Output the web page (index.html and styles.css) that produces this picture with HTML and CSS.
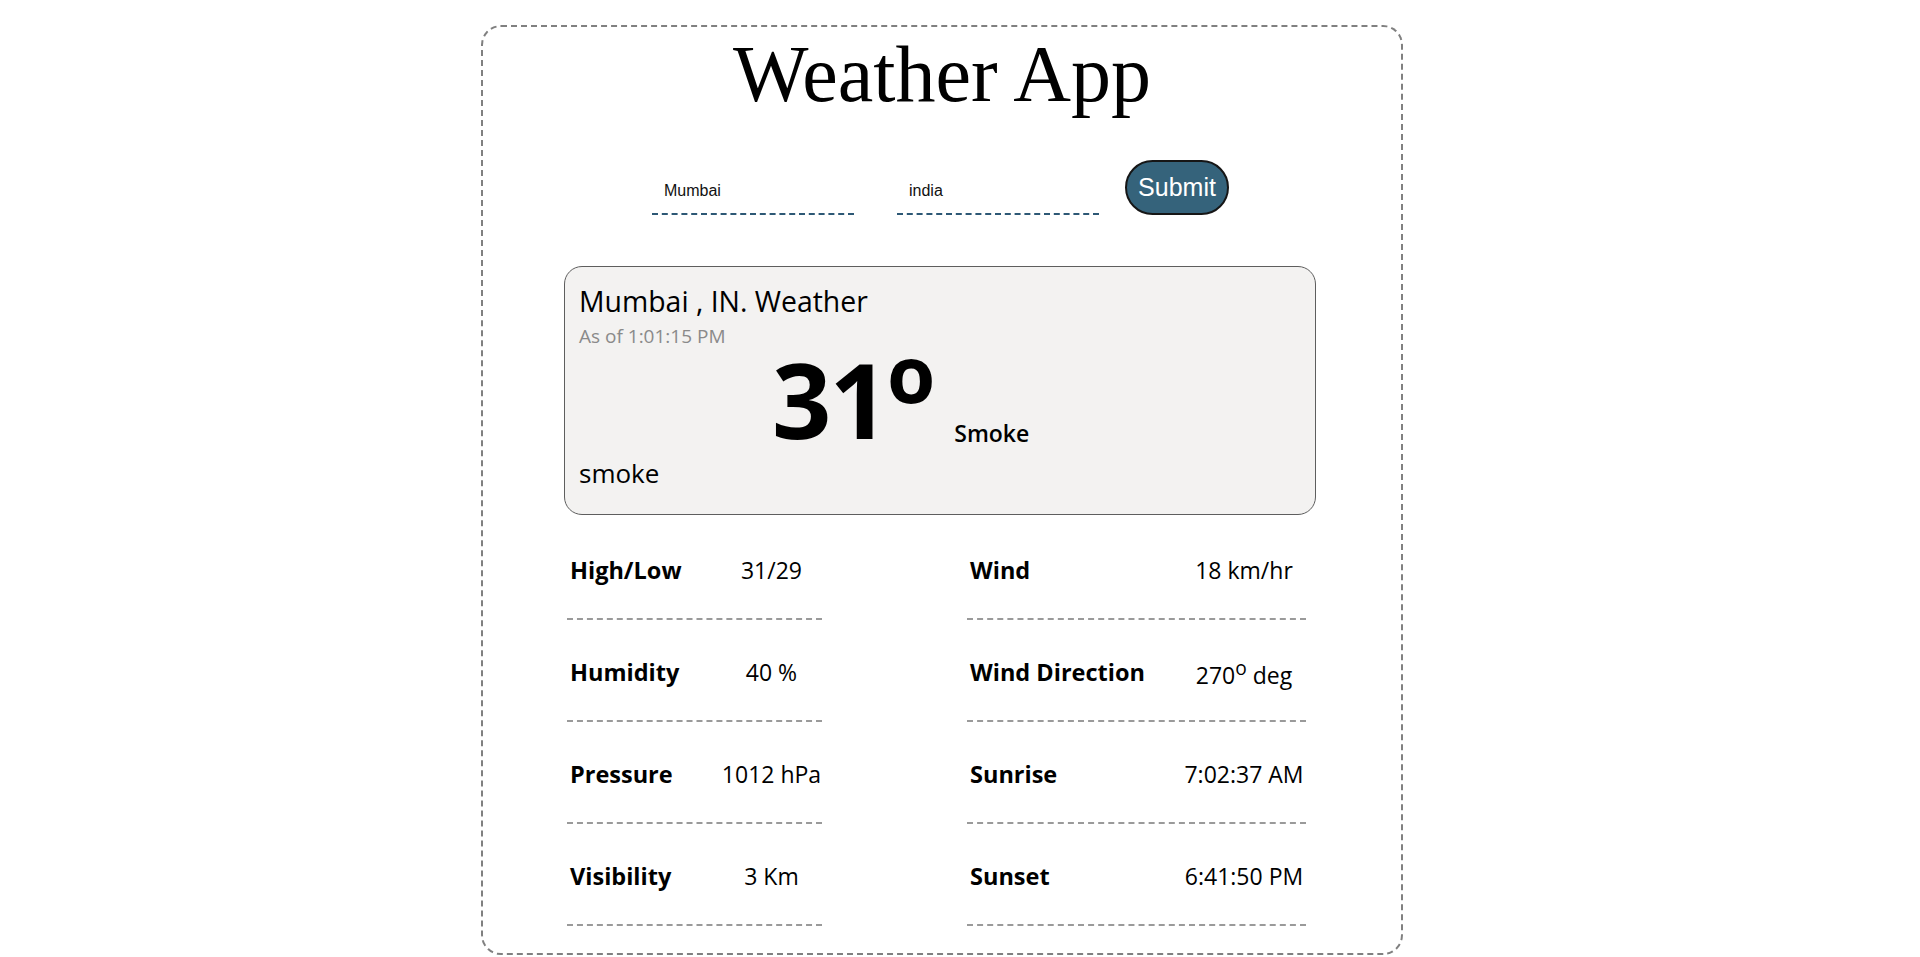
FILE: index.html
```html
<!DOCTYPE html>
<html lang="en">
<head>
<meta charset="utf-8">
<title>Weather App</title>
<link rel="stylesheet" href="styles.css">
</head>
<body>
<div class="app">
  <h1 class="title">Weather App</h1>
  <form class="search">
    <input class="field field-city" type="text" value="Mumbai">
    <input class="field field-country" type="text" value="india">
    <button class="submit" type="button">Submit</button>
  </form>
  <section class="card">
    <div class="card-title">Mumbai , IN. Weather</div>
    <div class="card-time">As of 1:01:15 PM</div>
    <div class="temp-row"><span class="temp">31<sup>o</sup></span><span class="cond">Smoke</span></div>
    <div class="desc">smoke</div>
  </section>
  <div class="details">
    <div class="table table-left">
      <div class="row"><span class="label">High/Low</span><span class="value">31/29</span></div>
      <div class="row"><span class="label">Humidity</span><span class="value">40 %</span></div>
      <div class="row"><span class="label">Pressure</span><span class="value">1012 hPa</span></div>
      <div class="row"><span class="label">Visibility</span><span class="value">3 Km</span></div>
    </div>
    <div class="table table-right">
      <div class="row"><span class="label">Wind</span><span class="value">18 km/hr</span></div>
      <div class="row"><span class="label">Wind Direction</span><span class="value">270<sup>o</sup> deg</span></div>
      <div class="row"><span class="label">Sunrise</span><span class="value">7:02:37 AM</span></div>
      <div class="row"><span class="label">Sunset</span><span class="value">6:41:50 PM</span></div>
    </div>
  </div>
</div>
</body>
</html>
```
FILE: styles.css
```css
html {
  overflow: hidden;
}

body {
  margin: 0;
  background: #ffffff;
  color: #000000;
  font-family: "Open Sans", "Noto Sans", sans-serif;
}

.app {
  margin: 25px 0 0 481px;
  width: 918px;
  padding-bottom: 27px;
  border: 2px dashed #808080;
  border-radius: 20px;
}

.title {
  margin: 2px 0 0;
  font-family: "Liberation Serif", "Times New Roman", serif;
  font-size: 80px;
  font-weight: 400;
  line-height: 90px;
  text-align: center;
}

.search {
  margin: 41px 0 0;
  padding-right: 3px;
  display: flex;
  align-items: baseline;
  justify-content: center;
}

.field {
  box-sizing: border-box;
  width: 202px;
  padding: 13px 12px;
  border: none;
  border-bottom: 2px dashed #2d5875;
  background: transparent;
  font-family: "Liberation Sans", Arial, sans-serif;
  font-size: 16px;
  color: #111111;
  outline: none;
}

.field-city {
  margin-right: 43px;
}

.field-country {
  margin-right: 26px;
}

.submit {
  box-sizing: border-box;
  width: 104px;
  height: 55px;
  padding: 0;
  border: 2px solid #161616;
  border-radius: 28px;
  background: #35637b;
  color: #ffffff;
  font-family: "Liberation Sans", Arial, sans-serif;
  font-size: 25px;
  line-height: 29px;
}

.card {
  margin: 51px 0 0 81px;
  width: 752px;
  box-sizing: border-box;
  padding: 18px 14px 25px;
  border: 1px solid #5e5e5e;
  border-radius: 18px;
  background: #f3f2f1;
}

.card-title {
  font-size: 28.4px;
  line-height: 32px;
}

.card-time {
  margin-top: 6px;
  font-size: 19px;
  line-height: 26px;
  color: #8a8a8a;
}

.temp-row {
  height: 108px;
  padding-left: 193px;
  line-height: 100px;
  white-space: nowrap;
}

.temp {
  font-size: 104px;
  font-weight: 700;
  letter-spacing: -2px;
}

.temp sup {
  font-size: 75%;
  line-height: 0;
}

.cond {
  margin-left: 21px;
  font-size: 23px;
  font-weight: 600;
  vertical-align: -3px;
}

.desc {
  font-size: 26px;
  line-height: 32px;
}

.details {
  margin: 3px 0 0 84px;
  display: flex;
  gap: 145px;
}

.table-left {
  width: 255px;
}

.table-right {
  width: 339px;
}

.row {
  box-sizing: border-box;
  height: 102px;
  padding-top: 3px;
  display: grid;
  align-items: center;
  border-bottom: 2px dashed #9a9a9a;
  line-height: 30px;
  white-space: nowrap;
}

.table-left .row {
  grid-template-columns: 1fr 101px;
}

.table-right .row {
  grid-template-columns: 1fr 124px;
}

.label {
  padding-left: 3px;
  font-size: 23.5px;
  font-weight: 700;
}

.value {
  font-size: 23px;
  text-align: center;
}
```
